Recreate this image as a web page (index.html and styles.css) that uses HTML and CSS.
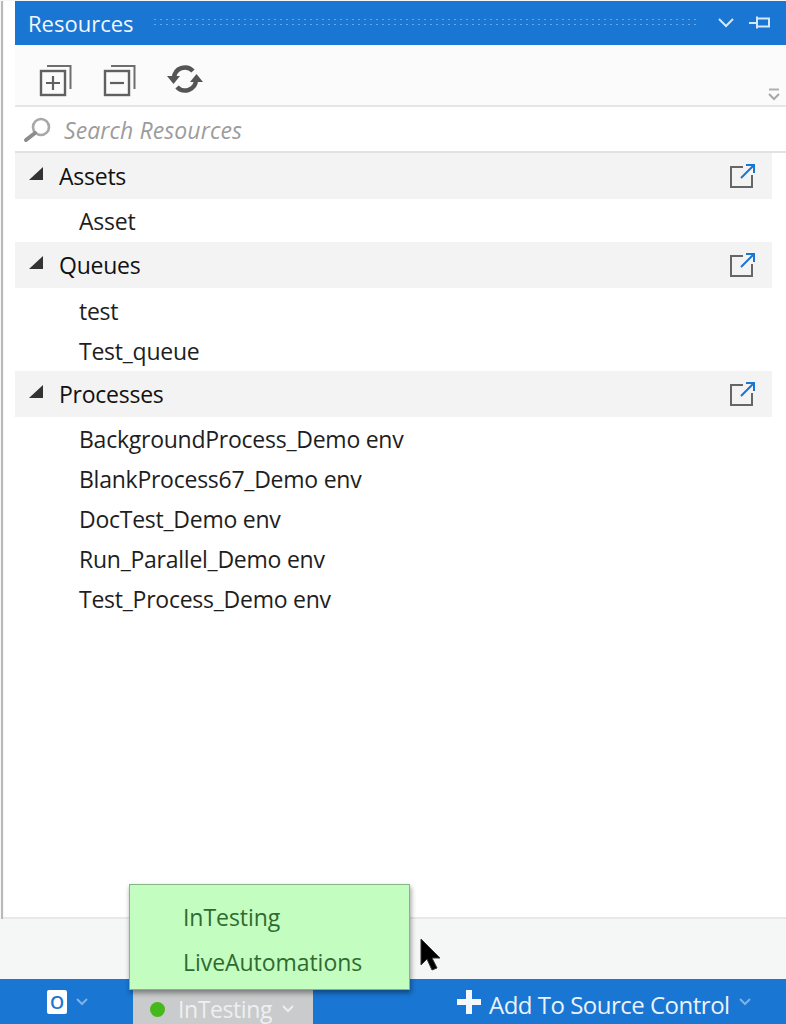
FILE: index.html
```html
<!DOCTYPE html>
<html lang="en">
<head>
<meta charset="utf-8">
<title>Resources</title>
<link rel="stylesheet" href="styles.css">
</head>
<body>
<div class="window">
  <div class="workspace">
    <main class="panel">
      <header class="titlebar">
        <span class="title">Resources</span>
        <span class="grip"></span>
        <svg class="chev" width="18" height="12" viewBox="0 0 18 12"><path d="M2 2l7 7 7-7" fill="none" stroke="#d6e8f8" stroke-width="2"/></svg>
        <svg class="pin" width="22" height="14" viewBox="0 0 22 14"><path d="M0 7h8M8 .5v12M8 2.5h12v8H8" fill="none" stroke="#d6e8f8" stroke-width="2"/></svg>
      </header>
      <div class="toolbar">
        <svg class="tool" width="34" height="34" viewBox="0 0 34 34"><path d="M8 3h23.500v23" fill="none" stroke="#6e6e6e" stroke-width="2"/><rect x="2" y="8" width="24" height="24" fill="#fbfbfb" stroke="#606060" stroke-width="2.400"/><path d="M14 13v14M7 20h14" stroke="#606060" stroke-width="2.200"/></svg>
        <svg class="tool" width="34" height="34" viewBox="0 0 34 34"><path d="M8 3h23.500v23" fill="none" stroke="#6e6e6e" stroke-width="2"/><rect x="2" y="8" width="24" height="24" fill="#fbfbfb" stroke="#606060" stroke-width="2.400"/><path d="M7 20h14" stroke="#606060" stroke-width="2.200"/></svg>
        <svg class="tool" width="36" height="32" viewBox="0 0 36 32"><path d="M7 15a11 11 0 0 1 19-7" fill="none" stroke="#555" stroke-width="4.500"/><path d="M29 17a11 11 0 0 1-19 7" fill="none" stroke="#555" stroke-width="4.500"/><path d="M0 13h13l-6.500 8zM23 19h13l-6.500-8z" fill="#555"/></svg>
        <svg class="overflow" width="12" height="14" viewBox="0 0 12 14"><path d="M1 1.500h10" stroke="#b0b0b0" stroke-width="2"/><path d="M1 6l5 5 5-5" fill="none" stroke="#a8a8a8" stroke-width="2"/></svg>
      </div>
      <div class="search">
        <svg width="32" height="28" viewBox="0 0 32 28"><circle cx="19" cy="11" r="8" fill="none" stroke="#a8a8a8" stroke-width="2.600"/><path d="M13 17l-9 7" stroke="#8c8c8c" stroke-width="4" stroke-linecap="round"/></svg>
        <span class="placeholder">Search Resources</span>
      </div>
      <section>
        <div class="group">
          <svg class="caret" width="14" height="13" viewBox="0 0 14 13"><path d="M14 0v13H0z" fill="#333"/></svg>
          <span class="group-name">Assets</span>
          <svg class="open" width="26" height="26" viewBox="0 0 26 26"><path d="M14 4H2v20h21V12" fill="none" stroke="#666" stroke-width="2"/><path d="M12 15L24 3M17 2h8v8" fill="none" stroke="#1976d2" stroke-width="2"/></svg>
        </div>
        <ul class="items single">
          <li>Asset</li>
        </ul>
      </section>
      <section>
        <div class="group">
          <svg class="caret" width="14" height="13" viewBox="0 0 14 13"><path d="M14 0v13H0z" fill="#333"/></svg>
          <span class="group-name">Queues</span>
          <svg class="open" width="26" height="26" viewBox="0 0 26 26"><path d="M14 4H2v20h21V12" fill="none" stroke="#666" stroke-width="2"/><path d="M12 15L24 3M17 2h8v8" fill="none" stroke="#1976d2" stroke-width="2"/></svg>
        </div>
        <ul class="items pad">
          <li>test</li>
          <li>Test_queue</li>
        </ul>
      </section>
      <section>
        <div class="group">
          <svg class="caret" width="14" height="13" viewBox="0 0 14 13"><path d="M14 0v13H0z" fill="#333"/></svg>
          <span class="group-name">Processes</span>
          <svg class="open" width="26" height="26" viewBox="0 0 26 26"><path d="M14 4H2v20h21V12" fill="none" stroke="#666" stroke-width="2"/><path d="M12 15L24 3M17 2h8v8" fill="none" stroke="#1976d2" stroke-width="2"/></svg>
        </div>
        <ul class="items pad-deep">
          <li>BackgroundProcess_Demo env</li>
          <li>BlankProcess67_Demo env</li>
          <li>DocTest_Demo env</li>
          <li>Run_Parallel_Demo env</li>
          <li>Test_Process_Demo env</li>
        </ul>
      </section>
    </main>
  </div>
  <footer class="statusbar">
    <div class="status-left">
      <span class="org"><span class="org-o">O</span></span>
      <svg class="mini" width="12" height="8" viewBox="0 0 12 8"><path d="M1 1l5 5 5-5" fill="none" stroke="#7fb2e5" stroke-width="2"/></svg>
    </div>
    <div class="env">
      <span class="dot"></span>
      <span class="env-name">InTesting</span>
      <svg width="12" height="8" viewBox="0 0 12 8"><path d="M1 1l5 5 5-5" fill="none" stroke="#eceff1" stroke-width="2"/></svg>
    </div>
    <div class="source">
      <svg width="26" height="26" viewBox="0 0 26 26"><path d="M13 1v24M1 13h24" stroke="#f4f8fc" stroke-width="6"/></svg>
      <span class="source-name">Add To Source Control</span>
      <svg class="mini" width="12" height="8" viewBox="0 0 12 8"><path d="M1 1l5 5 5-5" fill="none" stroke="#7fb2e5" stroke-width="2"/></svg>
    </div>
  </footer>
  <div class="menu">
    <div class="menu-item">InTesting</div>
    <div class="menu-item">LiveAutomations</div>
  </div>
  <svg class="cursor" width="22" height="34" viewBox="0 0 22 34"><path d="M1 1v26l6-6 5 11 5-2-5-10h8z" fill="#000" stroke="#333"/></svg>
</div>
</body>
</html>
```

FILE: styles.css
```css
* { box-sizing: border-box; }
html, body { margin: 0; padding: 0; }
body { background: #f5f6f6; font-family: "Open Sans", "Noto Sans", sans-serif; color: #1b1b1b; }
ul { list-style: none; margin: 0; padding: 0; }
.window { position: relative; width: 786px; height: 1024px; display: flex; flex-direction: column; overflow: hidden; }
.workspace { height: 979px; padding: 1px 0 0 1px; }
.panel { width: 785px; height: 918px; padding-left: 11px; border-left: 2px solid #b9b9b9; display: flex; flex-direction: column; background: linear-gradient(#fff, #fff) 1px 0 no-repeat; box-shadow: inset 0 -2px 0 #e8e8e8; }
.panel > * { margin-left: 1px; }
.titlebar { height: 44px; background: #1976d2; display: flex; align-items: center; padding: 0 15px 0 13px; flex: none; }
.title { font-size: 22px; letter-spacing: 0; color: #f2f7fc; }
.grip { flex: 1; height: 12px; margin: 0 18px 0 18px; background-image: radial-gradient(#6aa8e4 1px, transparent 1.200px); background-size: 6px 5px; }
.chev { margin-right: 14px; }
.toolbar { height: 62px; background: #fbfbfb; border-bottom: 2px solid #e6e6e6; display: flex; align-items: flex-start; gap: 30px; padding: 18px 0 0 24px; flex: none; }
.overflow { margin-left: auto; margin-right: 6px; margin-top: 25px; }
.search { height: 46px; background: #fff; border-bottom: 2px solid #e2e2e2; display: flex; align-items: center; gap: 10px; padding: 1px 0 0 7px; flex: none; }
.placeholder { font-size: 23px; font-style: italic; letter-spacing: 0.1px; color: #9c9c9c; }
section { background: #fff; }
.group { height: 46px; width: 757px; background: #f3f3f3; display: flex; align-items: center; padding-left: 14px; }
.caret { margin-right: 16px; margin-top: -5px; }
.group-name { font-size: 23px; letter-spacing: -0.25px; color: #111; font-weight: 500; }
.open { margin-left: auto; margin-right: 17px; }
.items li { height: 40px; display: flex; align-items: center; padding-left: 64px; font-size: 23px; letter-spacing: -0.25px; color: #1e1e1e; }
.single li { height: 43px; }
.pad { padding-top: 3px; }
.pad-deep { padding-top: 2px; }
.statusbar { height: 45px; background: #1976d2; display: flex; align-items: center; flex: none; position: relative; }
.status-left { width: 133px; display: flex; align-items: center; padding-left: 47px; gap: 9px; }
.org { width: 20px; height: 24px; background: #fff; border-radius: 2px; display: flex; align-items: center; justify-content: center; color: #1976d2; }
.org-o { font-size: 18px; font-weight: 600; line-height: 1; }
.env { width: 180px; height: 45px; align-self: flex-end; background: #c9cbcc; color: #eef0f1; display: flex; align-items: center; padding: 15px 0 0 17px; font-size: 23px; letter-spacing: -0.4px; }
.dot { width: 15px; height: 15px; border-radius: 50%; background: #46b81e; margin-right: 13px; }
.env-name { margin-right: 10px; }
.source { display: flex; align-items: center; gap: 7px; margin-left: 143px; color: #eaf2fb; font-size: 24px; letter-spacing: -0.5px; }
.source-name { padding-top: 6px; line-height: 1; }
.source .mini { margin-left: 2px; }
.menu { position: absolute; left: 129px; top: 884px; width: 281px; height: 106px; background: #c4fdc0; border: 1px solid #86b686; box-shadow: 1px 3px 5px rgba(0,0,0,.4); padding: 9px 0 0 53px; }
.menu-item { height: 45px; display: flex; align-items: center; font-size: 23px; letter-spacing: -0.05px; color: #2f6b30; }
.cursor { position: absolute; left: 420px; top: 938px; }
```
